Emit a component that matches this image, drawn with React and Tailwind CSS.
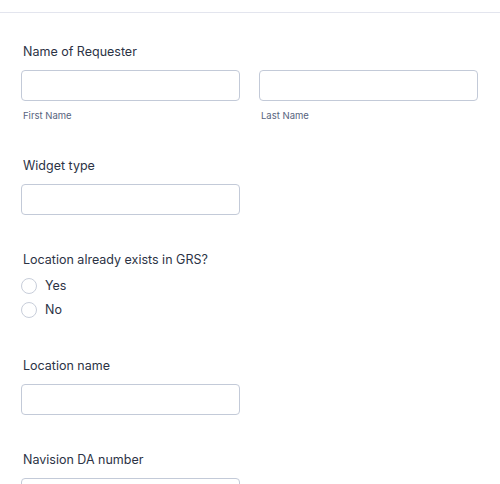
import React from 'react';

const font = { fontFamily: 'Inter, "Noto Sans", sans-serif' };

const Label = ({ children }) => (
  <div className="pl-[2px] pt-[1px] text-[12.5px] leading-5 font-normal text-[#2c3345]">{children}</div>
);

const TextBox = ({ className = '' }) => (
  <input
    type="text"
    className={`block h-[31px] w-[219px] rounded-[4px] border border-[#c3cad8] bg-white px-2 text-[13px] text-[#2c3345] outline-none ${className}`}
  />
);

const Radio = ({ label }) => (
  <label className="flex h-6 items-center gap-[8px]">
    <span className="block h-4 w-4 rounded-full border border-[#c8ceda] bg-white" />
    <span className="text-[12.5px] text-[#2c3345]">{label}</span>
  </label>
);

const App = () => {
  return (
    <div className="h-[484px] w-[500px] overflow-hidden bg-white" style={font}>
      <div className="h-[13px] border-b border-[#e3e5ee]" />

      <div className="px-[21px]">
        {/* Name of Requester */}
        <div className="mt-[28px]">
          <Label>Name of Requester</Label>
          <div className="mt-[8px] flex gap-[19px]">
            <div>
              <TextBox />
              <div className="mt-[8px] pl-[2px] text-[9.5px] leading-[14px] text-[#57647e]">First Name</div>
            </div>
            <div>
              <TextBox />
              <div className="mt-[8px] pl-[2px] text-[9.5px] leading-[14px] text-[#57647e]">Last Name</div>
            </div>
          </div>
        </div>

        {/* Widget type */}
        <div className="mt-[32px]">
          <Label>Widget type</Label>
          <TextBox className="mt-[8px] w-[218px]" />
        </div>

        {/* Location already exists */}
        <div className="mt-[34px]">
          <Label>Location already exists in GRS?</Label>
          <div className="mt-[4px]">
            <Radio label="Yes" />
            <Radio label="No" />
          </div>
        </div>

        {/* Location name */}
        <div className="mt-[33px]">
          <Label>Location name</Label>
          <TextBox className="mt-[8px] w-[218px]" />
        </div>

        {/* Navision DA number */}
        <div className="mt-[34px]">
          <Label>Navision DA number</Label>
          <TextBox className="mt-[8px] w-[218px]" />
        </div>
      </div>
    </div>
  );
};

export default App;
